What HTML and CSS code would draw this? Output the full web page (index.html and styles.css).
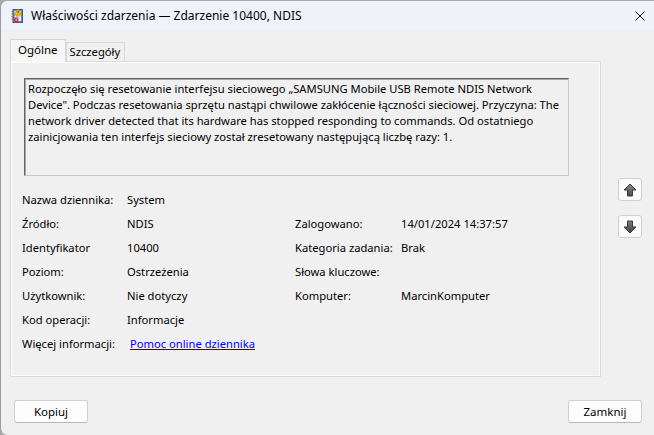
FILE: index.html
```html
<!DOCTYPE html>
<html lang="pl">
  <head>
    <meta charset="utf-8">
    <title>Właściwości zdarzenia</title>
    <link rel="stylesheet" href="styles.css">
  </head>
  <body>
  <div class="window">
    <div class="titlebar">
      <svg class="app-icon" width="12" height="14" viewBox="0 0 12 14">
        <rect x="2" y="0.5" width="9.5" height="13" fill="#6f86b8" stroke="#3f5690"/>
        <rect x="3.5" y="2" width="6.5" height="10" fill="#e9eef7"/>
        <line x1="5" y1="5" x2="9" y2="5" stroke="#8a9cc4"/>
        <line x1="5" y1="7" x2="9" y2="7" stroke="#8a9cc4"/>
        <line x1="0.5" y1="2.5" x2="3" y2="2.5" stroke="#777"/>
        <line x1="0.5" y1="5" x2="3" y2="5" stroke="#777"/>
        <line x1="0.5" y1="7.5" x2="3" y2="7.5" stroke="#777"/>
        <line x1="0.5" y1="10" x2="3" y2="10" stroke="#777"/>
        <polygon points="7,0 11,6 3,6" fill="#f7c600" stroke="#a77d00" stroke-width="0.6"/>
        <rect x="6.6" y="2" width="0.9" height="2.3" fill="#333"/>
        <circle cx="5.2" cy="10.6" r="2.4" fill="#d8232a"/>
        <circle cx="5.2" cy="10.6" r="0.9" fill="#fff"/>
      </svg>
      <span class="title">Właściwości zdarzenia — Zdarzenie 10400, NDIS</span>
      <svg class="close" width="10" height="10" viewBox="0 0 10 10">
        <path d="M0.5 0.5 L9.5 9.5 M9.5 0.5 L0.5 9.5" stroke="#1a1a1a" stroke-width="1"/>
      </svg>
    </div>

    <div class="body">
      <div class="tabs">
        <div class="tab active">Ogólne</div>
        <div class="tab">Szczegóły</div>
      </div>

      <div class="middle">
        <div class="panel">
          <div class="description">Rozpoczęło się resetowanie interfejsu sieciowego „SAMSUNG Mobile USB Remote NDIS Network Device". Podczas resetowania sprzętu nastąpi chwilowe zakłócenie łączności sieciowej. Przyczyna: The network driver detected that its hardware has stopped responding to commands. Od ostatniego zainicjowania ten interfejs sieciowy został zresetowany następującą liczbę razy: 1.</div>

          <div class="fields">
            <span>Nazwa dziennika:</span><span>System</span><span></span><span></span>
            <span>Źródło:</span><span>NDIS</span><span>Zalogowano:</span><span>14/01/2024 14:37:57</span>
            <span>Identyfikator</span><span>10400</span><span>Kategoria zadania:</span><span>Brak</span>
            <span>Poziom:</span><span>Ostrzeżenia</span><span>Słowa kluczowe:</span><span></span>
            <span>Użytkownik:</span><span>Nie dotyczy</span><span>Komputer:</span><span>MarcinKomputer</span>
            <span>Kod operacji:</span><span>Informacje</span><span></span><span></span>
            <span>Więcej informacji:</span><span><a class="link" href="#">Pomoc online dziennika</a></span><span></span><span></span>
          </div>
        </div>

        <div class="side">
          <button class="arrow">
            <svg width="14" height="14" viewBox="0 0 14 14">
              <defs>
                <linearGradient id="g1" x1="0" y1="0" x2="0" y2="1">
                  <stop offset="0" stop-color="#8a8a8a"/>
                  <stop offset="1" stop-color="#4a4a4a"/>
                </linearGradient>
              </defs>
              <polygon points="7,1 13,7 9.5,7 9.5,13 4.5,13 4.5,7 1,7" fill="url(#g1)" stroke="#3a3a3a" stroke-linejoin="round"/>
            </svg>
          </button>
          <button class="arrow">
            <svg width="14" height="14" viewBox="0 0 14 14">
              <defs>
                <linearGradient id="g2" x1="0" y1="0" x2="0" y2="1">
                  <stop offset="0" stop-color="#7a7a7a"/>
                  <stop offset="1" stop-color="#444"/>
                </linearGradient>
              </defs>
              <polygon points="7,13 13,7 9.5,7 9.5,1 4.5,1 4.5,7 1,7" fill="url(#g2)" stroke="#3a3a3a" stroke-linejoin="round"/>
            </svg>
          </button>
        </div>
      </div>

      <div class="footer">
        <button class="btn">Kopiuj</button>
        <button class="btn">Zamknij</button>
      </div>
    </div>
  </div>
  </body>
</html>
```

FILE: styles.css
```css
html, body {
  margin: 0;
  padding: 0;
  width: 100%;
  height: 100%;
  background: #a9a9a9;
  overflow: hidden;
}

body {
  font-family: "Noto Sans", "Liberation Sans", sans-serif;
  font-size: 11.2px;
  color: #000;
}

.window {
  margin-top: 1px;
  height: 434px;
  box-sizing: border-box;
  border-left: 1px solid #9a9a9a;
  border-radius: 7px 0 0 7px;
  background: #f0f0f0;
  overflow: hidden;
  display: flex;
  flex-direction: column;
}

.titlebar {
  height: 29px;
  background: #eff3f9;
  display: flex;
  align-items: center;
  flex-shrink: 0;
}

.app-icon {
  margin-left: 10px;
  margin-top: 1px;
}

.title {
  margin-left: 8px;
  font-size: 12px;
  flex-grow: 1;
}

.close {
  margin-right: 9px;
}

.body {
  flex-grow: 1;
  display: flex;
  flex-direction: column;
  padding-left: 9px;
}

.tabs {
  display: flex;
  align-items: flex-end;
  height: 22px;
  margin-top: 9px;
  position: relative;
  z-index: 1;
}

.tab {
  height: 19px;
  line-height: 18px;
  padding: 0 4px 0 3px;
  border: 1px solid #d9d9d9;
  border-bottom: none;
  background: #f0f0f0;
  box-sizing: border-box;
}

.tab.active {
  height: 23px;
  margin-bottom: -1px;
  padding: 0 7px 0 7px;
  line-height: 20px;
  font-size: 11.5px;
  background: #f6f6f6;
  border-color: #d6d6d6;
}

.middle {
  display: flex;
  align-items: flex-start;
}

.panel {
  width: 591px;
  height: 316px;
  box-sizing: border-box;
  border: 1px solid #dadada;
  box-shadow: inset 1px 1px 0 #fff, inset -1px -1px 0 #fbfbfb;
  padding: 16px 0 0 11px;
}

.description {
  margin-left: 2px;
  width: 545px;
  height: 98px;
  box-sizing: border-box;
  border-top: 1px solid #646464;
  border-left: 1px solid #646464;
  border-right: 1px solid #c8c8c8;
  border-bottom: 1px solid #c8c8c8;
  box-shadow: inset 1px 1px 0 #a8a8a8;
  padding: 2px 6px 0 3px;
  line-height: 16px;
}

.fields {
  margin-top: 11px;
  display: grid;
  grid-template-columns: 105px 168px 106px auto;
  grid-auto-rows: 24px;
  align-items: center;
}

.link {
  color: #0000ff;
  margin-left: 3px;
}

.side {
  display: flex;
  flex-direction: column;
  margin-left: 17px;
  margin-top: 117px;
  gap: 14px;
}

.arrow {
  width: 24px;
  height: 23px;
  padding: 0;
  border: 1px solid #d0d0d0;
  border-radius: 3px;
  background: #fbfbfb;
  display: flex;
  align-items: center;
  justify-content: center;
}

.footer {
  display: flex;
  justify-content: space-between;
  margin-top: 23px;
  padding-left: 4px;
  padding-right: 12px;
}

.btn {
  width: 74px;
  height: 23px;
  padding: 0;
  font-family: inherit;
  font-size: 11.5px;
  color: #000;
  background: #fdfdfd;
  border: 1px solid #d0d0d0;
  border-bottom-color: #b8b8b8;
  border-radius: 3px;
}
```
